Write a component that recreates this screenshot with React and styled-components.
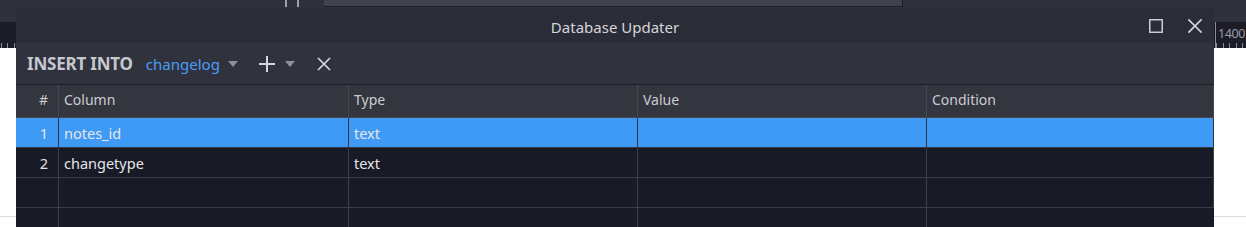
import React from "react";
import styled, { createGlobalStyle } from "styled-components";

const Global = createGlobalStyle`
  html, body { margin: 0; padding: 0; background: #ffffff; overflow: hidden; }
  body { font-family: "Noto Sans", "Open Sans", sans-serif; }
`;

const Page = styled.div`
  position: relative;
  width: 1246px;
  height: 227px;
  display: flex;
  flex-direction: column;
  overflow: hidden;
`;

const AppTop = styled.div`
  height: 22px;
  background: #2f313c;
  display: flex;
  align-items: flex-start;
  padding-left: 285px;
`;

const Splitter = styled.div`
  width: 2px;
  height: 7px;
  background: #9c9ea8;
  margin-right: ${(p) => p.$mr}px;
`;

const TopPanel = styled.div`
  width: 578px;
  height: 6px;
  background: #404250;
  border-bottom: 1px solid #1c1d25;
  border-right: 1px solid #1c1d25;
`;

const Ruler = styled.div`
  height: 26px;
  background-color: #1b1c26;
  background-image: repeating-linear-gradient(
    to right,
    #8a8c96 0px,
    #8a8c96 1px,
    transparent 1px,
    transparent 6.5px
  );
  background-size: 100% 5px;
  background-position: 1px bottom;
  background-repeat: no-repeat;
  display: flex;
  justify-content: flex-end;
`;

const RulerLabel = styled.div`
  width: 31px;
  height: 100%;
  border-left: 1px solid #8a8c96;
  box-sizing: border-box;
  color: #9c9ea8;
  font-size: 12.5px;
  padding: 3px 0 0 2px;
  font-family: "Noto Sans", sans-serif;
  letter-spacing: -0.4px;
  white-space: nowrap;
`;

const Canvas = styled.div`
  flex: 1;
  background: #ffffff;
  display: flex;
  flex-direction: column;
  justify-content: flex-end;
  padding-bottom: 10px;
`;

const CanvasLine = styled.div`
  height: 1px;
  background: #dcdcdc;
`;

const Window = styled.div`
  position: absolute;
  left: 16px;
  top: 8px;
  width: 1198px;
  height: 300px;
  background: #181a25;
  display: flex;
  flex-direction: column;
`;

const TitleBar = styled.div`
  height: 35px;
  box-sizing: border-box;
  padding-top: 2px;
  background: #2a2c37;
  position: relative;
  display: flex;
  align-items: center;
  justify-content: center;
  color: #d6d6da;
  font-size: 15px;
`;

const WinButtons = styled.div`
  position: absolute;
  right: 9px;
  top: 0;
  height: 100%;
  display: flex;
  align-items: center;
  gap: 18px;
`;

const IconBtn = styled.div`
  width: 21px;
  height: 21px;
  display: flex;
  align-items: center;
  justify-content: center;
  color: #d6d6dc;
`;

const Toolbar = styled.div`
  height: 41px;
  background: #30323e;
  border-bottom: 1px solid #1c1e27;
  display: flex;
  align-items: center;
  padding-left: 11px;
`;

const InsertLabel = styled.span`
  font-weight: 700;
  font-size: 17px;
  color: #c7c8ce;
  letter-spacing: -0.2px;
  margin-right: 13px;
`;

const TableName = styled.span`
  font-size: 15px;
  color: #4a9df5;
  margin-right: 8px;
`;

const CaretBox = styled.span`
  display: inline-flex;
  margin-top: 1px;
`;

const Caret = () => (
  <CaretBox>
    <svg width="10" height="6" viewBox="0 0 10 6">
      <path d="M0 0 L10 0 L5 6 Z" fill="#8f9099" />
    </svg>
  </CaretBox>
);

const ToolIcon = styled.span`
  display: inline-flex;
  margin-left: ${(p) => p.$ml || 0}px;
  margin-right: ${(p) => p.$mr || 0}px;
`;

const Grid = styled.div`
  display: grid;
  grid-template-columns: 43px 290px 289px 289px 1fr;
`;

const HeadCell = styled.div`
  height: 33px;
  background: #33353f;
  border-right: 1px solid #45474f;
  border-bottom: 1px solid #45474f;
  color: #cbccd1;
  font-size: 14px;
  display: flex;
  align-items: center;
  justify-content: ${(p) => (p.$num ? "flex-end" : "flex-start")};
  padding: ${(p) => (p.$num ? "0 10px 3px 0" : "0 0 3px 5px")};
  box-sizing: border-box;
  &:last-child { border-right: 1px solid #4a4c55; }
`;

const Cell = styled.div`
  height: 28px;
  background: ${(p) => (p.$selected ? "#3f9af5" : "#181a25")};
  border-right: 1px solid ${(p) => (p.$selected ? "#2b3446" : "#3c3e48")};
  border-bottom: 1px solid #3a3c46;
  color: #e6e6ea;
  font-size: 14.5px;
  padding-top: 1px;
  box-sizing: content-box;
  display: flex;
  align-items: center;
  justify-content: ${(p) => (p.$num ? "flex-end" : "flex-start")};
  padding-left: ${(p) => (p.$num ? 0 : 5)}px;
  padding-right: ${(p) => (p.$num ? 10 : 0)}px;
  &:last-child { border-right: none; }
`;

const columns = ["#", "Column", "Type", "Value", "Condition"];
const rows = [
  ["1", "notes_id", "text", "", ""],
  ["2", "changetype", "text", "", ""],
  ["", "", "", "", ""],
  ["", "", "", "", ""],
];

export default function App() {
  return (
    <>
      <Global />
      <Page>
        <AppTop>
          <Splitter $mr={10} />
          <Splitter $mr={25} />
          <TopPanel />
        </AppTop>
        <Ruler>
          <RulerLabel>1400</RulerLabel>
        </Ruler>
        <Canvas>
          <CanvasLine />
        </Canvas>

        <Window>
          <TitleBar>
            Database Updater
            <WinButtons>
              <IconBtn>
                <svg width="14" height="14" viewBox="0 0 14 14">
                  <rect x="0.75" y="0.75" width="12.5" height="12.5" fill="none" stroke="currentColor" strokeWidth="1.4" />
                </svg>
              </IconBtn>
              <IconBtn>
                <svg width="14" height="14" viewBox="0 0 14 14">
                  <path d="M1 1 L13 13 M13 1 L1 13" stroke="currentColor" strokeWidth="1.7" strokeLinecap="square" />
                </svg>
              </IconBtn>
            </WinButtons>
          </TitleBar>
          <Toolbar>
            <InsertLabel>INSERT INTO</InsertLabel>
            <TableName>changelog</TableName>
            <Caret />
            <ToolIcon $ml={21} $mr={10}>
              <svg width="16" height="16" viewBox="0 0 16 16">
                <path d="M8 0 V16 M0 8 H16" stroke="#d6d6dc" strokeWidth="2" />
              </svg>
            </ToolIcon>
            <Caret />
            <ToolIcon $ml={22}>
              <svg width="14" height="14" viewBox="0 0 14 14">
                <path d="M1 1 L13 13 M13 1 L1 13" stroke="#d6d6dc" strokeWidth="1.7" />
              </svg>
            </ToolIcon>
          </Toolbar>
          <Grid>
            {columns.map((c, i) => (
              <HeadCell key={c} $num={i === 0}>{c}</HeadCell>
            ))}
            {rows.map((r, ri) =>
              r.map((v, ci) => (
                <Cell key={`${ri}-${ci}`} $num={ci === 0} $selected={ri === 0}>
                  {v}
                </Cell>
              ))
            )}
          </Grid>
        </Window>
      </Page>
    </>
  );
}
